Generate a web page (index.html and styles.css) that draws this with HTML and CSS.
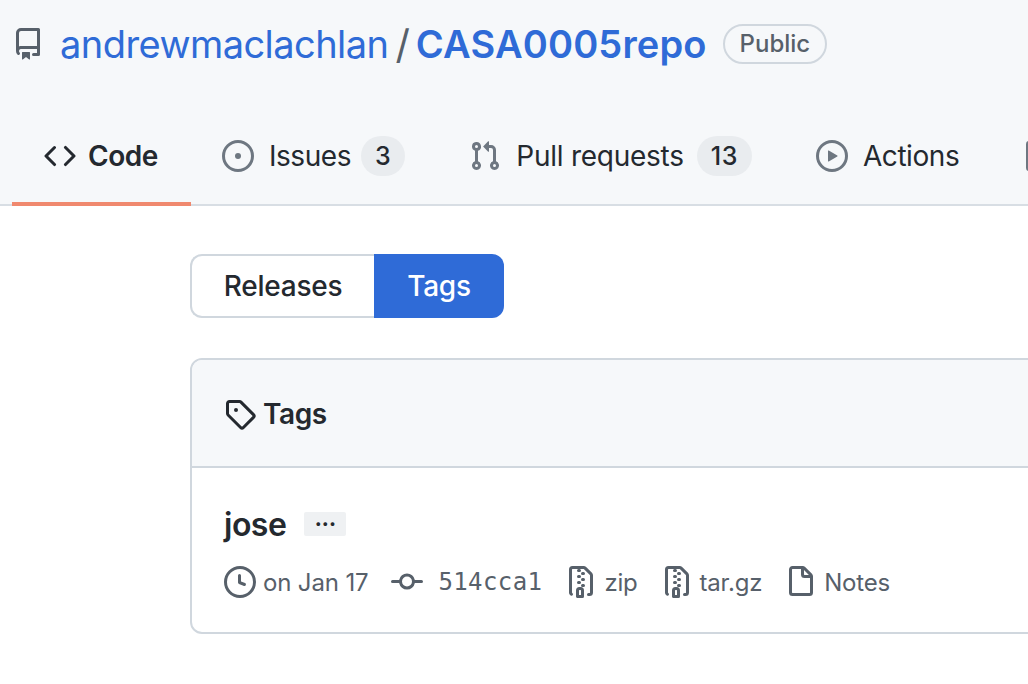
FILE: index.html
```html
<!DOCTYPE html>
<html lang="en">
<head>
<meta charset="utf-8">
<title>Tags · andrewmaclachlan/CASA0005repo</title>
<link rel="stylesheet" href="styles.css">
</head>
<body>
<header class="pagehead">
  <div class="repo-title">
    <svg class="icon icon-repo" viewBox="0 0 16 16"><path d="M2 2.5A2.5 2.5 0 014.5 0h8.75a.75.75 0 01.75.75v12.5a.75.75 0 01-.75.75h-2.5a.75.75 0 110-1.5h1.75v-2h-8a1 1 0 00-.714 1.7.75.75 0 01-1.072 1.05A2.495 2.495 0 012 11.5v-9zm10.5-1V9h-8c-.356 0-.694.074-1 .208V2.5a1 1 0 011-1h8zM5 12.25v3.25a.25.25 0 00.4.2l1.45-1.087a.25.25 0 01.3 0L8.6 15.7a.25.25 0 00.4-.2v-3.25a.25.25 0 00-.25-.25h-3.5a.25.25 0 00-.25.25z"/></svg>
    <a class="owner" href="#">andrewmaclachlan</a>
    <span class="slash">/</span>
    <a class="repo" href="#">CASA0005repo</a>
    <span class="public">Public</span>
  </div>
  <nav class="tabs">
    <a class="tab tab-active" href="#">
      <svg class="icon icon-code" viewBox="0 0 16 16"><path d="M4.72 3.22a.75.75 0 011.06 1.06L2.06 8l3.72 3.72a.75.75 0 11-1.06 1.06L.47 8.53a.75.75 0 010-1.06l4.25-4.25zm6.56 0a.75.75 0 10-1.06 1.06L13.94 8l-3.72 3.72a.75.75 0 101.06 1.06l4.25-4.25a.75.75 0 000-1.06l-4.25-4.25z"/></svg>
      <span>Code</span>
    </a>
    <a class="tab" href="#">
      <svg class="icon icon-muted" viewBox="0 0 16 16"><path d="M8 9.5a1.5 1.5 0 100-3 1.5 1.5 0 000 3z"/><path d="M8 0a8 8 0 110 16A8 8 0 018 0zM1.5 8a6.5 6.5 0 1013 0 6.5 6.5 0 00-13 0z"/></svg>
      <span>Issues</span><span class="counter">3</span>
    </a>
    <a class="tab tab-pulls" href="#">
      <svg class="icon icon-muted" viewBox="0 0 16 16"><path d="M7.177 3.073L9.573.677A.25.25 0 0110 .854v4.792a.25.25 0 01-.427.177L7.177 3.427a.25.25 0 010-.354zM3.75 2.5a.75.75 0 100 1.5.75.75 0 000-1.5zm-2.25.75a2.25 2.25 0 113 2.122v5.256a2.251 2.251 0 11-1.5 0V5.372A2.25 2.25 0 011.5 3.25zM11 2.5h-1V4h1a1 1 0 011 1v5.628a2.251 2.251 0 101.5 0V5A2.5 2.5 0 0011 2.5zm1 10.25a.75.75 0 111.5 0 .75.75 0 01-1.5 0zM3.75 12a.75.75 0 100 1.5.75.75 0 000-1.5z"/></svg>
      <span>Pull requests</span><span class="counter counter-wide">13</span>
    </a>
    <a class="tab" href="#">
      <svg class="icon icon-muted" viewBox="0 0 16 16"><path d="M8 0a8 8 0 110 16A8 8 0 018 0zM1.5 8a6.5 6.5 0 1013 0 6.5 6.5 0 00-13 0zm4.879-2.773l4.264 2.559a.25.25 0 010 .428l-4.264 2.559A.25.25 0 016 10.559V5.442a.25.25 0 01.379-.215z"/></svg>
      <span>Actions</span>
    </a>
    <a class="tab tab-clipped" href="#" aria-label="Projects">
      <svg class="icon icon-muted" viewBox="0 0 16 16"><path d="M3 .5h11.5A1.5 1.5 0 0116 2v12a1.5 1.5 0 01-1.5 1.5H3A1.5 1.5 0 011.5 14V2A1.5 1.5 0 013 .5zM3 2v12h11.5V2z"/></svg>
    </a>
  </nav>
</header>
<main class="content">
  <div class="subnav">
    <a class="subnav-item" href="#">Releases</a>
    <a class="subnav-item subnav-selected" href="#">Tags</a>
  </div>
  <section class="box">
    <div class="box-header">
      <svg class="icon icon-tag" viewBox="0 0 16 16"><path d="M1 7.775V2.75C1 1.784 1.784 1 2.75 1h5.025c.464 0 .91.184 1.238.513l6.25 6.25a1.75 1.75 0 010 2.474l-5.026 5.026a1.75 1.75 0 01-2.474 0l-6.25-6.25A1.75 1.75 0 011 7.775zm1.5 0c0 .066.026.13.073.177l6.25 6.25a.25.25 0 00.354 0l5.025-5.025a.25.25 0 000-.354l-6.25-6.25a.25.25 0 00-.177-.073H2.75a.25.25 0 00-.25.25v5.025zM6 5a1 1 0 110 2 1 1 0 010-2z"/></svg>
      <h2 class="box-title">Tags</h2>
    </div>
    <div class="box-row">
      <div class="tag-line">
        <a class="tag-name" href="#">jose</a>
        <span class="hidden-expander">···</span>
      </div>
      <div class="meta">
        <span class="meta-item meta-time">
          <svg class="icon" viewBox="0 0 16 16"><path d="M1.5 8a6.5 6.5 0 1113 0 6.5 6.5 0 01-13 0zM8 0a8 8 0 100 16A8 8 0 008 0zm.5 4.75a.75.75 0 00-1.5 0v3.5a.75.75 0 00.471.696l2.5 1a.75.75 0 00.557-1.392L8.5 7.742V4.75z"/></svg>
          <span>on Jan 17</span>
        </span>
        <span class="meta-item meta-commit">
          <svg class="icon" viewBox="0 0 16 16"><path d="M10.5 7.75a2.5 2.5 0 11-5 0 2.5 2.5 0 015 0zm1.43.75a4.002 4.002 0 01-7.86 0H.75a.75.75 0 110-1.5h3.32a4.002 4.002 0 017.86 0h3.32a.75.75 0 110 1.5h-3.32z"/></svg>
          <code class="sha">514cca1</code>
        </span>
        <span class="meta-item">
          <svg class="icon" viewBox="0 0 16 16"><path d="M3.5 1.75a.25.25 0 01.25-.25h3a.75.75 0 000 1.5h.5a.75.75 0 000-1.5h2.086a.25.25 0 01.177.073l2.914 2.914a.25.25 0 01.073.177v8.586a.25.25 0 01-.25.25h-.5a.75.75 0 000 1.5h.5A1.75 1.75 0 0014 13.25V4.664c0-.464-.184-.909-.513-1.237L10.573.513A1.75 1.75 0 009.336 0H3.75A1.75 1.75 0 002 1.75v11.5c0 .649.353 1.214.874 1.515a.75.75 0 10.752-1.298.25.25 0 01-.126-.217V1.75zM8.75 3a.75.75 0 000 1.5h.5a.75.75 0 000-1.5h-.5zM6 5.25a.75.75 0 01.75-.75h.5a.75.75 0 010 1.5h-.5A.75.75 0 016 5.25zm2 1.5A.75.75 0 018.75 6h.5a.75.75 0 010 1.5h-.5A.75.75 0 018 6.75zm-1.25.75a.75.75 0 000 1.5h.5a.75.75 0 000-1.5h-.5zM8 9.75A.75.75 0 018.75 9h.5a.75.75 0 010 1.5h-.5A.75.75 0 018 9.75zm-.75.75a1.75 1.75 0 00-1.75 1.75v3c0 .414.336.75.75.75h2.5a.75.75 0 00.75-.75v-3a1.75 1.75 0 00-1.75-1.75h-.5zM7 12.25a.25.25 0 01.25-.25h.5a.25.25 0 01.25.25v2.25H7v-2.25z"/></svg>
          <span>zip</span>
        </span>
        <span class="meta-item">
          <svg class="icon" viewBox="0 0 16 16"><path d="M3.5 1.75a.25.25 0 01.25-.25h3a.75.75 0 000 1.5h.5a.75.75 0 000-1.5h2.086a.25.25 0 01.177.073l2.914 2.914a.25.25 0 01.073.177v8.586a.25.25 0 01-.25.25h-.5a.75.75 0 000 1.5h.5A1.75 1.75 0 0014 13.25V4.664c0-.464-.184-.909-.513-1.237L10.573.513A1.75 1.75 0 009.336 0H3.75A1.75 1.75 0 002 1.75v11.5c0 .649.353 1.214.874 1.515a.75.75 0 10.752-1.298.25.25 0 01-.126-.217V1.75zM8.75 3a.75.75 0 000 1.5h.5a.75.75 0 000-1.5h-.5zM6 5.25a.75.75 0 01.75-.75h.5a.75.75 0 010 1.5h-.5A.75.75 0 016 5.25zm2 1.5A.75.75 0 018.75 6h.5a.75.75 0 010 1.5h-.5A.75.75 0 018 6.75zm-1.25.75a.75.75 0 000 1.5h.5a.75.75 0 000-1.5h-.5zM8 9.75A.75.75 0 018.75 9h.5a.75.75 0 010 1.5h-.5A.75.75 0 018 9.75zm-.75.75a1.75 1.75 0 00-1.75 1.75v3c0 .414.336.75.75.75h2.5a.75.75 0 00.75-.75v-3a1.75 1.75 0 00-1.75-1.75h-.5zM7 12.25a.25.25 0 01.25-.25h.5a.25.25 0 01.25.25v2.25H7v-2.25z"/></svg>
          <span>tar.gz</span>
        </span>
        <span class="meta-item">
          <svg class="icon" viewBox="0 0 16 16"><path d="M3.75 1.5a.25.25 0 00-.25.25v11.5c0 .138.112.25.25.25h8.5a.25.25 0 00.25-.25V6H9.75A1.75 1.75 0 018 4.25V1.5H3.75zm5.75.56v2.19c0 .138.112.25.25.25h2.19L9.5 2.06zM2 1.75C2 .784 2.784 0 3.75 0h5.086c.464 0 .909.184 1.237.513l3.414 3.414c.329.328.513.773.513 1.237v8.086A1.75 1.75 0 0112.25 15h-8.5A1.75 1.75 0 012 13.25V1.75z"/></svg>
          <span>Notes</span>
        </span>
      </div>
    </div>
  </section>
</main>
</body>
</html>
```
FILE: styles.css
```css
* { box-sizing: border-box; }
html, body { height: 100%; }
body {
  margin: 0;
  overflow: hidden;
  background: #fff;
  color: #24292f;
  font-family: Inter, "Liberation Sans", sans-serif;
  font-size: 28px;
}
a { color: inherit; text-decoration: none; }

.icon { display: block; flex: none; width: 32px; height: 32px; fill: currentColor; fill-rule: evenodd; }
.icon-muted { color: #6e7781; }

.pagehead {
  height: 206px;
  background: #f6f8fa;
  border-bottom: 2px solid #d8dee4;
}
.repo-title {
  display: flex;
  align-items: center;
  height: 88px;
  padding-left: 12px;
  white-space: nowrap;
}
.icon-repo { color: #57606a; }
.owner, .repo { color: #2f6bd7; font-size: 38px; }
.owner { margin-left: 16px; letter-spacing: -0.56px; }
.repo { font-weight: 600; letter-spacing: 0.15px; }
.slash { margin: 0 6px 0 7px; color: #57606a; font-size: 40px; }
.public {
  margin-left: 16px;
  height: 40px;
  line-height: 36px;
  padding: 0 15px;
  border: 2px solid #d0d7de;
  border-radius: 20px;
  color: #57606a;
  font-size: 24px;
  font-weight: 500;
}

.tabs {
  display: flex;
  height: 118px;
  padding-left: 12px;
  white-space: nowrap;
}
.tab {
  display: flex;
  align-items: center;
  gap: 15px;
  height: 118px;
  padding: 18px 32px 0;
  letter-spacing: -0.45px;
}
.tab-active {
  gap: 12px;
  margin-right: -1px;
  padding-top: 22px;
  padding-right: 33px;
  font-weight: 600;
  border-bottom: 4px solid #f0896f;
}
.tab-pulls { letter-spacing: -0.25px; }
.tab-clipped { padding-right: 0; }
.icon-code { color: #24292f; }
.counter {
  min-width: 44px;
  height: 40px;
  line-height: 40px;
  padding: 0 14px;
  margin-left: -5px;
  text-align: center;
  letter-spacing: 0.6px;
  border-radius: 20px;
  background: #e9ecef;
  font-size: 25px;
  font-weight: 500;
}
.counter-wide { margin-left: -2px; }

.content { padding: 48px 0 0 190px; }
.subnav { display: flex; width: 314px; height: 64px; font-size: 28px; font-weight: 500; letter-spacing: -0.25px; }
.subnav-item {
  display: flex;
  align-items: center;
  justify-content: center;
}
.subnav-item:first-child {
  width: 184px;
  border: 2px solid #d0d7de;
  border-right: 0;
  border-radius: 12px 0 0 12px;
}
.subnav-selected {
  width: 130px;
  background: #2f6bd7;
  color: #fff;
  border-radius: 0 12px 12px 0;
}

.box {
  width: 1000px;
  height: 276px;
  margin-top: 40px;
  border: 2px solid #d0d7de;
  border-radius: 12px;
}
.box-header {
  display: flex;
  align-items: center;
  gap: 7px;
  height: 108px;
  padding: 2px 0 0 32px;
  background: #f6f8fa;
  border-bottom: 2px solid #d0d7de;
  border-radius: 10px 10px 0 0;
}
.box-title { margin: 0; font-size: 28px; font-weight: 600; letter-spacing: -0.4px; }

.box-row { padding: 32px 0 0 32px; }
.tag-line { display: flex; align-items: center; gap: 18px; height: 48px; }
.tag-name { font-size: 32px; font-weight: 600; letter-spacing: -0.5px; }
.hidden-expander {
  width: 42px;
  height: 24px;
  line-height: 24px;
  text-align: center;
  background: #eff1f3;
  border-radius: 2px;
  font-size: 20px;
  font-weight: 800;
}
.meta {
  display: flex;
  align-items: center;
  gap: 23px;
  margin-top: 18px;
  color: #57606a;
  font-size: 24px;
  letter-spacing: -0.2px;
}
.meta-item { display: flex; align-items: center; gap: 7px; white-space: nowrap; }
.meta-time { letter-spacing: -0.15px; }
.meta-commit { gap: 5px; }
.sha { margin-left: 10px; font-family: "DejaVu Sans Mono", monospace; font-size: 24px; letter-spacing: 0.4px; }
```
